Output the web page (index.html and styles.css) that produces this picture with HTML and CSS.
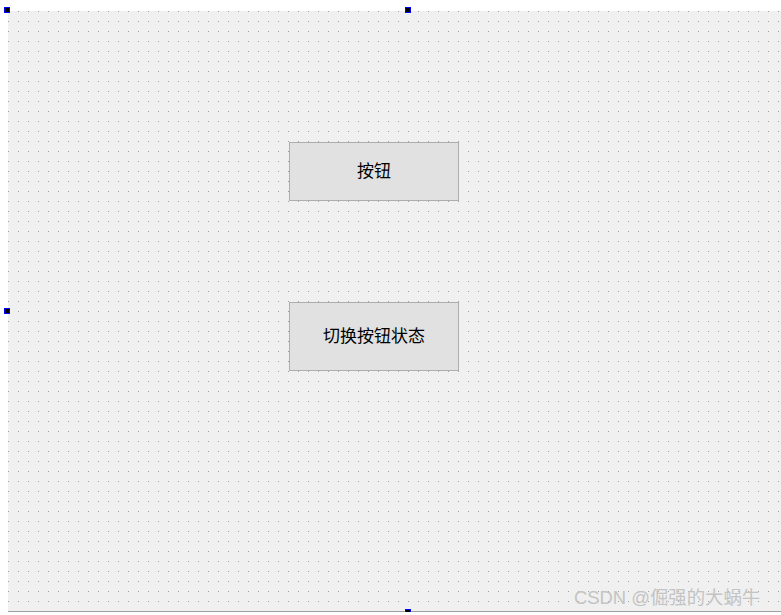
FILE: index.html
```html
<!DOCTYPE html>
<html lang="zh-CN">
<head>
  <meta charset="UTF-8">
  <meta name="viewport" content="width=device-width, initial-scale=1.0">
  <link rel="stylesheet" href="styles.css">
  <title>Form</title>
</head>
<body>
  <div id="form">
    <!-- selection handles of the form -->
    <div class="handle handle-tl"></div>
    <div class="handle handle-tm"></div>
    <div class="handle handle-ml"></div>
    <div class="handle handle-bm"></div>

    <!-- widgets placed on the form -->
    <button class="widget" id="btn-main">按钮</button>
    <button class="widget" id="btn-toggle">切换按钮状态</button>

    <div id="watermark">CSDN @倔强的大蜗牛</div>
  </div>
</body>
</html>
```

FILE: styles.css
```css
body {
  margin: 0;
  background-color: #fff;
  overflow: hidden;
}

#form {
  position: relative;
  margin: 11px 0 0 8px;
  width: 800px;
  height: 600px;
  background-color: #f0f0f0;
  background-image: conic-gradient(from 270deg at 1px 1px, #a0a0a0 90deg, transparent 0);
  background-size: 10px 10px;
  border-bottom: 1px solid #a0a0a0;
}

.handle {
  position: absolute;
  width: 4px;
  height: 4px;
  border: 1px solid #0000ff;
  background-color: #000;
}

.handle-tl { left: -4px; top: -4px; }
.handle-tm { left: 397px; top: -4px; }
.handle-ml { left: -4px; top: 297px; }
.handle-bm { left: 397px; top: 598px; }

.widget {
  position: absolute;
  box-sizing: border-box;
  margin: 0;
  padding: 0 0 4px 0;
  width: 170px;
  border: 1px solid #adadad;
  background-color: #e1e1e1;
  color: #000;
  font-family: "Liberation Serif", "Noto Sans CJK SC", serif;
  font-size: 17px;
}

#btn-main {
  left: 281px;
  top: 131px;
  height: 59px;
}

#btn-toggle {
  left: 281px;
  top: 291px;
  height: 69px;
}

#watermark {
  position: absolute;
  left: 566px;
  top: 572px;
  color: #c4c4c4;
  font-family: "Liberation Sans", "Noto Sans CJK SC", sans-serif;
  font-size: 18.4px;
  white-space: nowrap;
}
```
